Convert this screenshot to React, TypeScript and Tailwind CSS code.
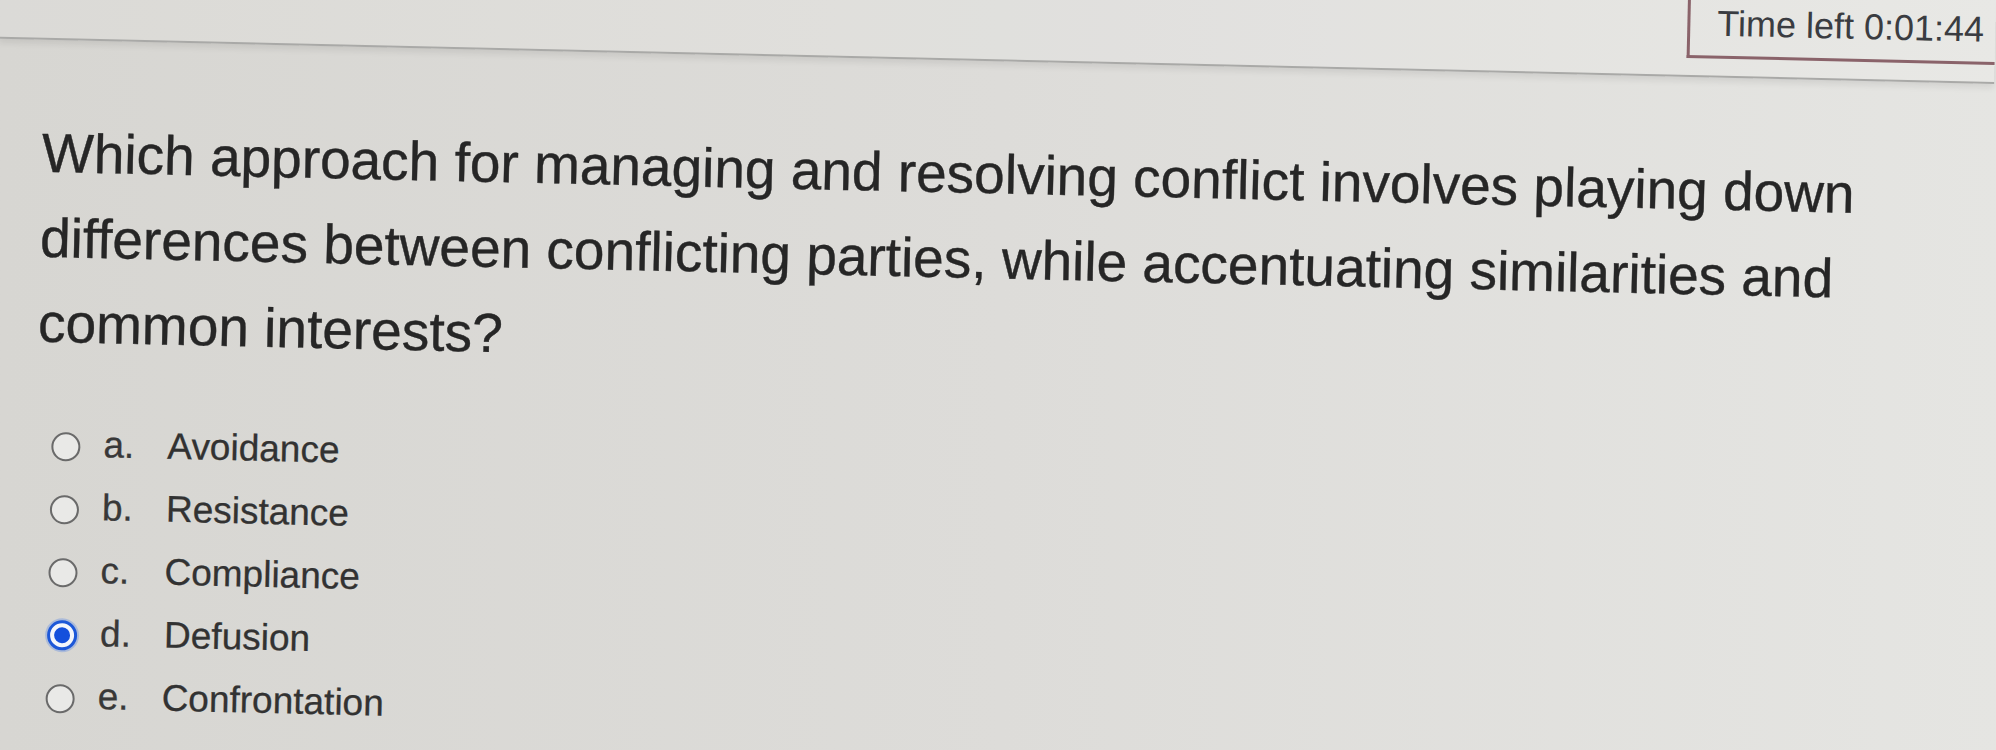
const options = [
  { key: "a.", text: "Avoidance", checked: false },
  { key: "b.", text: "Resistance", checked: false },
  { key: "c.", text: "Compliance", checked: false },
  { key: "d.", text: "Defusion", checked: true },
  { key: "e.", text: "Confrontation", checked: false },
]

function Radio({ checked }: { checked: boolean }) {
  if (checked) {
    return (
      <span className="mt-[5px] flex h-[30px] w-[30px] shrink-0 items-center justify-center rounded-full border-[3px] border-[#1d58d8] bg-[#f4f6fb] shadow-[0_0_0_2px_rgba(90,135,230,0.35)]">
        <span className="h-[16px] w-[16px] rounded-full bg-[#1450dc]" />
      </span>
    )
  }
  return (
    <span className="mt-[5px] h-[29px] w-[29px] shrink-0 rounded-full border-[2.5px] border-[#6a6a6a] bg-[#e9e9e7]" />
  )
}

export default function App() {
  return (
    <div className="h-[750px] w-[1996px] overflow-hidden bg-gradient-to-r from-[#d7d6d2] via-[#dddcd9] to-[#e5e5e2] font-['Liberation_Sans',Arial,sans-serif]">
      <div className="origin-top-right rotate-[1.3deg]">

        <header className="flex h-[84px] justify-end border-b-2 border-[#a9a9a7] bg-white/10 shadow-[0_4px_6px_rgba(0,0,0,0.08)]">
          <div className="h-[65px] w-[308px] whitespace-nowrap border-b-[3px] border-l-[3px] border-[#8a636a] pl-[27px] pt-[10px] text-[36px] leading-[40px] text-[#3a3c41]">
            Time left 0:01:44
          </div>
        </header>

        <main className="pl-[46px] pt-[71px]">
          <p className="w-[1880px] text-[55px] leading-[85px] text-[#262626] [-webkit-text-stroke:0.4px_#262626]">
            Which approach for managing and resolving conflict involves playing down differences between conflicting parties, while accentuating similarities and common interests?
          </p>

          <div className="mt-[46px] pl-[16px]">
            {options.map((o) => (
              <div key={o.key} className="flex h-[63px] items-center">
                <Radio checked={o.checked} />
                <span className="ml-[23px] w-[64px] text-[37px] leading-[63px] text-[#383838] [-webkit-text-stroke:0.3px_#383838]">{o.key}</span>
                <span className="text-[37px] leading-[63px] text-[#323232] [-webkit-text-stroke:0.3px_#323232]">{o.text}</span>
              </div>
            ))}
          </div>
        </main>

      </div>
    </div>
  )
}
